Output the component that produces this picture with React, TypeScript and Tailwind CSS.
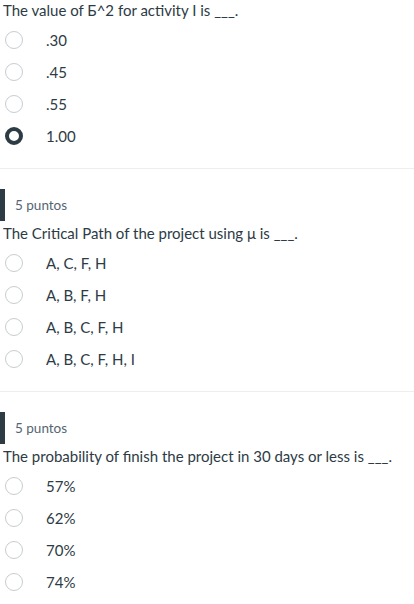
const questions = [
  {
    points: null as string | null,
    text: 'The value of Б^2 for activity I is ___.',
    options: ['.30', '.45', '.55', '1.00'],
    selected: 3,
  },
  {
    points: '5 puntos',
    text: 'The Critical Path of the project using μ is ___.',
    options: ['A, C, F, H', 'A, B, F, H', 'A, B, C, F, H', 'A, B, C, F, H, I'],
    selected: -1,
  },
  {
    points: '5 puntos',
    text: 'The probability of finish the project in 30 days or less is ___.',
    options: ['57%', '62%', '70%', '74%'],
    selected: -1,
  },
];

function Radio({ checked }: { checked: boolean }) {
  return checked ? (
    <span className="block w-[18px] h-[18px] rounded-full border-[4px] border-[#2d3b45] bg-white" />
  ) : (
    <span className="block w-[18px] h-[18px] rounded-full border border-[#c7cdd1] bg-white" />
  );
}

export default function App() {
  return (
    <div
      className="w-[414px] bg-white text-[#2d3b45]"
      style={{ fontFamily: 'Lato, "Noto Sans", sans-serif' }}
    >
      {questions.map((q, i) => (
        <div key={i} className={i > 0 ? 'border-t border-[#eeeeee] pt-5 pb-4' : 'pb-4'}>
          {q.points && (
            <div className="flex items-center h-8">
              <span className="w-[5px] h-8 bg-[#2d3b45]" />
              <span className="ml-[10px] text-[13.5px] text-[#556572]">{q.points}</span>
            </div>
          )}
          <div className={`pl-[3px] text-[15px] leading-5 whitespace-nowrap ${q.points ? 'mt-[2px]' : ''}`}>
            {q.text}
          </div>
          <div className="mt-1">
            {q.options.map((o, j) => (
              <label key={j} className="flex items-center h-8">
                <span className="ml-[5px]">
                  <Radio checked={j === q.selected} />
                </span>
                <span className="ml-[23px] text-[15px]">{o}</span>
              </label>
            ))}
          </div>
        </div>
      ))}
    </div>
  );
}
